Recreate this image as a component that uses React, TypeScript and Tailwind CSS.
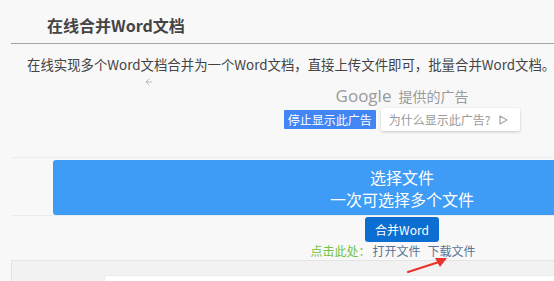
import { ArrowLeft } from 'lucide-react';

export default function App() {
    return (
        <div className="w-[554px] h-[281px] overflow-hidden bg-[#f8f8f8] relative" style={{ fontFamily: '"Microsoft YaHei", "Noto Sans CJK SC", "Noto Sans", sans-serif' }}>
            <div className="ml-[11px] w-[782px]">
                {/* Title */}
                <div className="h-[44px] border-b border-[#a3a3a3] pl-[36px] pt-[14px]">
                    <h1 className="text-[16px] leading-[22px] font-bold text-[#444]">在线合并Word文档</h1>
                </div>

                {/* Description */}
                <p className="pl-[16px] pt-[11px] text-[13.4px] leading-[18px] text-[#444] whitespace-nowrap">
                    在线实现多个Word文档合并为一个Word文档，直接上传文件即可，批量合并Word文档。
                </p>

                {/* Ad block */}
                <div className="w-[518px] mx-auto h-[84px] pt-[4px]">
                    <ArrowLeft className="w-[10px] h-[10px] text-[#999] ml-[1px]" strokeWidth={1.5} />
                    <div className="flex items-center justify-center gap-[7px] mt-[0px] text-[#9a9a9a] leading-[18px]">
                        <span className="text-[17px] font-medium" style={{ fontFamily: '"Open Sans", "Noto Sans", sans-serif' }}>Google</span>
                        <span className="text-[14px]">提供的广告</span>
                    </div>
                    <div className="flex items-center justify-center gap-[5px] mt-[3px]">
                        <div className="h-[19px] px-[4px] bg-[#4285f4] text-white text-[12px] leading-[19px] rounded-[1px]">停止显示此广告</div>
                        <div className="h-[23px] pl-[8px] pr-[12px] bg-white text-[#999] text-[12px] leading-[23px] rounded-[2px] shadow-[0_1px_3px_rgba(0,0,0,0.2)] flex items-center gap-[9px]">
                            <span>为什么显示此广告?</span>
                            <svg width="9" height="10" viewBox="0 0 9 10">
                                <path d="M1 1 L8 5 L1 9 Z M1 1 V9" fill="none" stroke="#aaa" strokeWidth="1.3" strokeLinejoin="round" />
                            </svg>
                        </div>
                    </div>
                </div>

                {/* Upload area */}
                <div className="border-y border-[#e6eef2] h-[59px] pt-[2px] pl-[42px]">
                    <div className="w-[698px] h-[55px] bg-[#3e9bf6] rounded-[3px] flex flex-col items-center justify-center text-white text-[16px] leading-[22px]">
                        <span>选择文件</span>
                        <span>一次可选择多个文件</span>
                    </div>
                </div>

                {/* Merge button */}
                <div className="flex justify-center pt-[1px]">
                    <button className="h-[25px] w-[74px] bg-[#0b6ed0] text-white text-[12px] rounded-[3px]">合并Word</button>
                </div>
                <div className="flex justify-center text-[12px] leading-[14px] mt-[2px] pr-[18px]">
                    <span className="text-[#72c244]">点击此处：</span>
                    <span className="text-[#5a7594] ml-[2px]">打开文件</span>
                    <span className="text-[#5a7594] ml-[7px]">下载文件</span>
                </div>

                {/* Lower panel */}
                <div className="mt-[2px] h-[40px] bg-[#f2f2f2] border-t border-l border-[#e4e4e4] pl-[92px] pt-[14px]">
                    <div className="h-[30px] bg-white rounded-tl-[3px] border border-[#ececec]"></div>
                </div>
            </div>

            {/* Annotation arrow */}
            <svg className="absolute left-[405px] top-[254px]" width="46" height="22" viewBox="0 0 46 22">
                <path d="M3 18 L34 8" stroke="#e8322a" strokeWidth="2.2" strokeLinecap="round" />
                <path d="M42 4 L30 4 L35 13 Z" fill="#e8322a" />
            </svg>
        </div>
    );
}
